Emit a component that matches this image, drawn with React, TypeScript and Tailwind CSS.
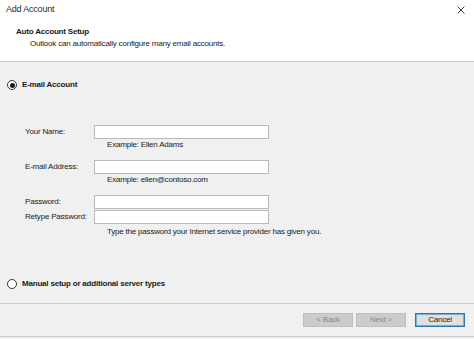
import React from 'react';

function Radio({ checked }: { checked?: boolean }) {
  return (
    <span className="w-[10px] h-[10px] rounded-full border border-[#333] bg-white flex items-center justify-center shrink-0">
      {checked && <span className="w-[5px] h-[5px] rounded-full bg-[#1a1a1a]" />}
    </span>
  );
}

function Field({ label, className = '' }: { label: string; className?: string }) {
  return (
    <div className={`flex items-center h-[14px] ${className}`}>
      <span className="w-[69px] leading-[12px]">{label}</span>
      <div className="w-[175px] h-[14px] bg-white border border-[#b9b9b9]" />
    </div>
  );
}

export default function App() {
  return (
    <div
      className="w-[474px] h-[339px] bg-[#f0f0f0] flex flex-col text-[8px] tracking-[-0.2px] text-[#1a1a1a] overflow-hidden"
      style={{ fontFamily: '"Liberation Sans", Arial, sans-serif' }}
    >
      {/* Header */}
      <div className="h-[62px] bg-white border-b border-[#cfcfcf] shrink-0">
        <div className="flex justify-between items-center h-[20px] pl-[6px] pr-[8px]">
          <span className="text-[9px] text-[#2a2a2a]">Add Account</span>
          <svg width="8" height="8" viewBox="0 0 8 8" className="mr-[1px]">
            <path d="M0.5 0.5 L7.5 7.5 M7.5 0.5 L0.5 7.5" stroke="#444" strokeWidth="1" />
          </svg>
        </div>
        <div className="pl-[16px] mt-[6px] font-bold leading-[12px]">Auto Account Setup</div>
        <div className="pl-[30px] leading-[12px]">Outlook can automatically configure many email accounts.</div>
      </div>

      {/* Body */}
      <div className="h-[242px] shrink-0 border-b border-[#cdcdcd] pl-[7px] flex flex-col">
        <label className="flex items-center gap-[5px] mt-[17px] h-[12px] font-bold">
          <Radio checked />
          E-mail Account
        </label>

        <div className="ml-[18px] flex flex-col">
          <Field label="Your Name:" className="mt-[34px]" />
          <div className="pl-[82px] leading-[12px]">Example: Ellen Adams</div>
          <Field label="E-mail Address:" className="mt-[9px]" />
          <div className="pl-[82px] leading-[12px]">Example: ellen@contoso.com</div>
          <Field label="Password:" className="mt-[9px]" />
          <Field label="Retype Password:" className="mt-[1px]" />
          <div className="pl-[82px] mt-[2px] leading-[12px]">
            Type the password your Internet service provider has given you.
          </div>
        </div>

        <label className="flex items-center gap-[5px] mt-[40px] h-[12px] font-bold">
          <Radio />
          Manual setup or additional server types
        </label>
      </div>

      {/* Footer */}
      <div className="h-[32px] shrink-0 flex justify-end items-start pt-[9px] pr-[9px]">
        <button className="w-[50px] h-[14px] bg-[#cccccc] border border-[#bfbfbf] text-[#8a8a8a] leading-[12px]">
          &lt; Back
        </button>
        <button className="w-[50px] h-[14px] ml-[3px] bg-[#cccccc] border border-[#bfbfbf] text-[#8a8a8a] leading-[12px]">
          Next &gt;
        </button>
        <button className="w-[50px] h-[14px] ml-[9px] bg-[#e1e1e1] border border-[#2f78ad] shadow-[inset_0_0_0_1px_#7aaed3] leading-[12px]">
          Cancel
        </button>
      </div>
      <div className="flex-1 border-t border-[#c8c8c8]" />
    </div>
  );
}
